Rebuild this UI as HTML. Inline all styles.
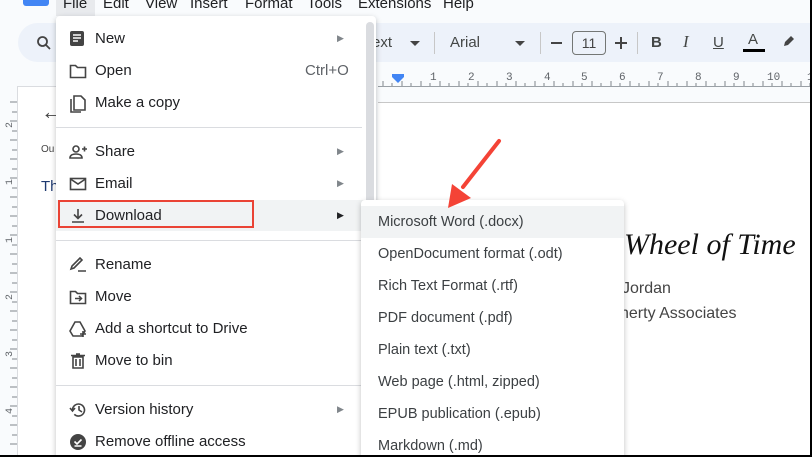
<!DOCTYPE html>
<html style="width:812px;height:457px;overflow:hidden"><head><meta charset="utf-8"><style>
*{margin:0;padding:0;box-sizing:border-box}
body{width:812px;height:457px;overflow:hidden;position:relative;background:#f9fbfd;font-family:"Liberation Sans",Arial,sans-serif;color:#202124}
.a{position:absolute;white-space:nowrap}
.mb{top:-5px;font-size:15px;color:#202124}
.mi{position:absolute;left:0;width:320px;height:32px}
.mi .t{position:absolute;left:39px;top:7px;font-size:15px;color:#202124}
.mi svg{position:absolute;left:13px;top:7px}
.mi .ar{position:absolute;left:281px;top:10px;font-size:9px;color:#80868b}
.sep{position:absolute;left:0;width:306px;height:1px;background:#dadce0}
.si{position:absolute;left:17px;font-size:14.5px;color:#3c4043}
.tb{font-size:15px;color:#444746;top:34px}
</style></head><body>
<div class="a" style="left:23px;top:-6px;width:26px;height:12px;background:#4285f4;border-radius:3px"></div>
<div class="a" style="left:56px;top:0;width:39px;height:16px;background:#e8eaed"></div>
<div class="a mb" style="left:63px">File</div>
<div class="a mb" style="left:103px">Edit</div>
<div class="a mb" style="left:145px">View</div>
<div class="a mb" style="left:190px">Insert</div>
<div class="a mb" style="left:245px">Format</div>
<div class="a mb" style="left:307px">Tools</div>
<div class="a mb" style="left:358px">Extensions</div>
<div class="a mb" style="left:443px">Help</div>
<div class="a" style="left:18px;top:23px;width:800px;height:39px;background:#edf2fa;border-radius:20px 0 0 20px"></div>
<svg class="a" style="left:36px;top:35px" width="16" height="16" viewBox="0 0 16 16"><circle cx="6.5" cy="6.5" r="4.5" fill="none" stroke="#444" stroke-width="1.8"/><path d="M10 10l4 4" stroke="#444" stroke-width="1.8"/></svg>
<div class="a tb" style="left:372px">ext</div>
<div class="a" style="left:410px;top:41px;border:5px solid transparent;border-top-color:#444;border-bottom:0"></div>
<div class="a" style="left:434px;top:32px;width:1px;height:22px;background:#c7c7c7"></div>
<div class="a tb" style="left:450px">Arial</div>
<div class="a" style="left:515px;top:41px;border:5px solid transparent;border-top-color:#444;border-bottom:0"></div>
<div class="a" style="left:540px;top:32px;width:1px;height:22px;background:#c7c7c7"></div>
<div class="a" style="left:551px;top:42px;width:11px;height:2px;background:#444"></div>
<div class="a" style="left:572px;top:31px;width:34px;height:24px;border:1px solid #747775;border-radius:4px;font-size:14px;text-align:center;line-height:22px;color:#444">11</div>
<div class="a" style="left:615px;top:42px;width:12px;height:2px;background:#444"></div>
<div class="a" style="left:620px;top:37px;width:2px;height:12px;background:#444"></div>
<div class="a" style="left:637px;top:32px;width:1px;height:22px;background:#c7c7c7"></div>
<div class="a tb" style="left:651px;font-weight:bold">B</div>
<div class="a tb" style="left:683px;font-style:italic;font-family:'Liberation Serif',serif;font-size:17px;top:32px">I</div>
<div class="a tb" style="left:713px;text-decoration:underline">U</div>
<div class="a tb" style="left:748px;top:31px">A</div>
<div class="a" style="left:743px;top:49px;width:22px;height:3px;background:#000"></div>
<svg class="a" style="left:781px;top:34px" width="15" height="15" viewBox="0 0 15 15"><path d="M3 12l1-4 6-6 3 3-6 6z" fill="#444"/></svg>
<div class="a" style="left:378px;top:86px;width:434px;height:1px;background:#9aa0a6"></div>
<svg class="a" style="left:378px;top:70px" width="434" height="17">
<g stroke="#80868b" stroke-width="1">
<path d="M5 11v5M24 11v5M43 11v5M62 11v5M81 11v5M100 11v5M119 11v5M138 11v5M157 11v5M176 11v5M195 11v5M214 11v5M233 11v5M252 11v5M271 11v5M290 11v5M309 11v5M328 11v5M347 11v5M366 11v5M385 11v5M404 11v5M423 11v5"/>
<path d="M14 13v3M33 13v3M52 13v3M71 13v3M90 13v3M109 13v3M128 13v3M147 13v3M166 13v3M185 13v3M204 13v3M223 13v3M242 13v3M261 13v3M280 13v3M299 13v3M318 13v3M337 13v3M356 13v3M375 13v3M394 13v3M413 13v3M432 13v3"/></g>
<g font-size="11" fill="#5f6368" font-family="Liberation Mono,monospace"><text x="52" y="10">1</text><text x="90" y="10">2</text><text x="128" y="10">3</text><text x="166" y="10">4</text><text x="203" y="10">5</text><text x="241" y="10">6</text><text x="279" y="10">7</text><text x="317" y="10">8</text><text x="355" y="10">9</text><text x="389" y="10">10</text><text x="429" y="10">1</text></g>
<path d="M14 4h12v3l-6 6-6-6z" fill="#4285f4"/></svg>
<div class="a" style="left:378px;top:102px;width:434px;height:1px;background:#c7c7c7"></div>
<div class="a" style="left:378px;top:103px;width:434px;height:354px;background:#fff"></div>
<div class="a" style="left:624px;top:228px;font-family:'Liberation Serif',serif;font-style:italic;font-size:30px;color:#111">Wheel of Time</div>
<div class="a" style="left:622px;top:280px;font-size:16px;color:#444">Jordan</div>
<div class="a" style="left:620px;top:305px;font-size:16px;color:#444">herty Associates</div>
<div class="a" style="left:17px;top:86px;width:1px;height:371px;background:#dadce0"></div>
<div class="a" style="left:17px;top:86px;width:40px;height:1px;background:#dadce0"></div>
<div class="a" style="left:18px;top:87px;width:40px;height:370px;background:#fff"></div>
<svg class="a" style="left:0;top:86px" width="17" height="371"><g stroke="#80868b"><path d="M10 16h7M12 26h5M10 35h7M12 45h5M10 54h7M12 64h5M10 73h7M12 83h5M10 92h7M12 102h5M10 111h7M12 121h5M10 130h7M12 140h5M10 149h7M12 159h5M10 168h7M12 178h5M10 187h7M12 197h5M10 206h7M12 216h5M10 225h7M12 235h5M10 244h7M12 254h5M10 263h7M12 273h5M10 282h7M12 292h5M10 301h7M12 311h5M10 320h7M12 330h5M10 339h7M12 349h5M10 358h7"/></g>
<g font-size="10" fill="#5f6368" font-family="Liberation Mono,monospace"><text transform="translate(12,42) rotate(-90)">2</text><text transform="translate(12,99) rotate(-90)">1</text><text transform="translate(12,157) rotate(-90)">1</text><text transform="translate(12,214) rotate(-90)">2</text><text transform="translate(12,271) rotate(-90)">3</text><text transform="translate(12,328) rotate(-90)">4</text></g></svg>
<div class="a" style="left:41px;top:99px;font-size:22px;color:#444">←</div>
<div class="a" style="left:41px;top:144px;font-size:10px;color:#444">Ou</div>
<div class="a" style="left:41px;top:178px;font-size:15px;color:#1f3a70">Th</div>
<div class="a" style="left:56px;top:16px;width:320px;height:441px;background:#fff;border-radius:4px 4px 0 0;box-shadow:0 2px 6px rgba(0,0,0,.25)">
<div class="a" style="left:310px;top:6px;width:8px;height:440px;background:#dadce0;border-radius:4px"></div>
<div class="mi" style="top:7px"><svg width="16" height="18" viewBox="0 0 16 18"><rect x="1" y="1" width="14" height="15" rx="2" fill="#444"/><path d="M4 5h8M4 8h8M4 11h5" stroke="#fff" stroke-width="1.5"/></svg><span class="t">New</span><span class="ar">▶</span></div>
<div class="mi" style="top:39px"><svg width="18" height="18" viewBox="0 0 18 18"><path d="M1.5 3.5h5l2 2h8v10h-15z" fill="none" stroke="#444" stroke-width="1.6"/></svg><span class="t">Open</span><span class="t" style="left:249px;color:#5f6368">Ctrl+O</span></div>
<div class="mi" style="top:71px"><svg width="18" height="20" viewBox="0 0 18 20"><path d="M5 2h7l4 4v10H5z" fill="none" stroke="#444" stroke-width="1.6"/><path d="M2 5v13h10" fill="none" stroke="#444" stroke-width="1.6"/></svg><span class="t">Make a copy</span></div>
<div class="sep" style="top:111px"></div>
<div class="mi" style="top:120px"><svg width="18" height="18" viewBox="0 0 18 18"><circle cx="7" cy="6" r="3" fill="none" stroke="#444" stroke-width="1.6"/><path d="M1 15c0-3 3-4 6-4s6 1 6 4z" fill="none" stroke="#444" stroke-width="1.6"/><path d="M13 6h5M15.5 3.5v5" stroke="#444" stroke-width="1.6"/></svg><span class="t">Share</span><span class="ar">▶</span></div>
<div class="mi" style="top:152px"><svg width="18" height="18" viewBox="0 0 18 18"><rect x="1.5" y="3.5" width="15" height="11" fill="none" stroke="#444" stroke-width="1.6"/><path d="M1.5 4l7.5 5 7.5-5" fill="none" stroke="#444" stroke-width="1.6"/></svg><span class="t">Email</span><span class="ar">▶</span></div>
<div class="mi" style="top:184px;height:31px;background:#f1f3f4"><svg width="18" height="18" viewBox="0 0 18 18"><path d="M9 2v9M5 7.5l4 4 4-4M3 15h12" fill="none" stroke="#444" stroke-width="1.6"/></svg><span class="t">Download</span><span class="ar" style="color:#202124">▶</span></div>
<div class="a" style="left:2px;top:184px;width:196px;height:28px;border:2px solid #ea4335"></div>
<div class="sep" style="top:224px"></div>
<div class="mi" style="top:233px"><svg width="18" height="18" viewBox="0 0 18 18"><path d="M2 13l1-3 8-8 2 2-8 8zM9 15h8" fill="none" stroke="#444" stroke-width="1.6"/></svg><span class="t">Rename</span></div>
<div class="mi" style="top:265px"><svg width="18" height="18" viewBox="0 0 18 18"><path d="M1.5 3.5h5l2 2h8v10h-15z" fill="none" stroke="#444" stroke-width="1.6"/><path d="M6 10.5h6M10 8l2.5 2.5L10 13" fill="none" stroke="#444" stroke-width="1.5"/></svg><span class="t">Move</span></div>
<div class="mi" style="top:297px"><svg width="18" height="18" viewBox="0 0 18 18"><path d="M6 2h5l5 9-3 5H4l-3-5z" fill="none" stroke="#444" stroke-width="1.6"/><path d="M14 11v6M11 14h6" stroke="#444" stroke-width="1.6"/></svg><span class="t">Add a shortcut to Drive</span></div>
<div class="mi" style="top:329px"><svg width="18" height="18" viewBox="0 0 18 18"><path d="M4 5h10v11H4zM2 3.5h14M7 2h4M7 7v7M11 7v7" fill="none" stroke="#444" stroke-width="1.6"/></svg><span class="t">Move to bin</span></div>
<div class="sep" style="top:369px"></div>
<div class="mi" style="top:378px"><svg width="18" height="18" viewBox="0 0 18 18"><path d="M3.5 9a6 6 0 1 1 1.8 4.3" fill="none" stroke="#444" stroke-width="1.6"/><path d="M1 7l2.5 3 2.5-3M10 5v4l3 2" fill="none" stroke="#444" stroke-width="1.6"/></svg><span class="t">Version history</span><span class="ar">▶</span></div>
<div class="mi" style="top:410px"><svg width="18" height="18" viewBox="0 0 18 18"><circle cx="9" cy="9" r="8" fill="#444"/><path d="M5.5 8.5l2.5 2.5 4.5-4.5M5.5 13h7" fill="none" stroke="#fff" stroke-width="1.6"/></svg><span class="t">Remove offline access</span></div>
</div>
<div class="a" style="left:361px;top:200px;width:263px;height:257px;background:#fff;border-radius:4px 4px 0 0;box-shadow:0 2px 6px rgba(0,0,0,.25)">
<div class="a" style="left:0;top:6px;width:263px;height:32px;background:#f1f3f4"></div>
<div class="si" style="top:14px">Microsoft Word (.docx)</div>
<div class="si" style="top:46px">OpenDocument format (.odt)</div>
<div class="si" style="top:78px">Rich Text Format (.rtf)</div>
<div class="si" style="top:110px">PDF document (.pdf)</div>
<div class="si" style="top:142px">Plain text (.txt)</div>
<div class="si" style="top:174px">Web page (.html, zipped)</div>
<div class="si" style="top:206px">EPUB publication (.epub)</div>
<div class="si" style="top:238px">Markdown (.md)</div>
</div>
<svg class="a" style="left:0;top:0" width="812" height="457"><path d="M499 141L463 187" stroke="#f44336" stroke-width="4" stroke-linecap="round"/><path d="M448 208L452 184L471 198z" fill="#f44336"/></svg>
<div class="a" style="left:810px;top:0;width:2px;height:457px;background:#000"></div>
<div class="a" style="left:0;top:455px;width:812px;height:2px;background:#000"></div>
</body></html>
